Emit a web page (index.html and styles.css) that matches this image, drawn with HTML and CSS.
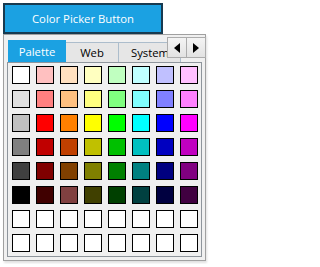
FILE: index.html
```html
<!DOCTYPE html>
<html>
<head>
<meta charset="utf-8">
<link rel="stylesheet" href="styles.css">
</head>
<body>
<div class="wrap">
  <div class="picker-btn">Color Picker Button</div>
  <div class="popup">
    <div class="tabstrip">
      <div class="tab active">Palette</div>
      <div class="tab">Web</div>
      <div class="tab">System</div>
    </div>
    <div class="scrollers">
      <div class="scroll-btn"><svg width="6" height="10" viewBox="0 0 6 10"><polygon points="6,0 6,10 0,5" fill="#000"/></svg></div>
      <div class="scroll-btn"><svg width="6" height="10" viewBox="0 0 6 10"><polygon points="0,0 0,10 6,5" fill="#000"/></svg></div>
    </div>
    <div class="content">
      <div class="grid">
        <span class="sw" style="background:#ffffff"></span>
        <span class="sw" style="background:#ffc0c0"></span>
        <span class="sw" style="background:#ffe0c0"></span>
        <span class="sw" style="background:#ffffc0"></span>
        <span class="sw" style="background:#c0ffc0"></span>
        <span class="sw" style="background:#c0ffff"></span>
        <span class="sw" style="background:#c0c0ff"></span>
        <span class="sw" style="background:#ffc0ff"></span>

        <span class="sw" style="background:#e0e0e0"></span>
        <span class="sw" style="background:#ff8080"></span>
        <span class="sw" style="background:#ffc080"></span>
        <span class="sw" style="background:#ffff80"></span>
        <span class="sw" style="background:#80ff80"></span>
        <span class="sw" style="background:#80ffff"></span>
        <span class="sw" style="background:#8080ff"></span>
        <span class="sw" style="background:#ff80ff"></span>

        <span class="sw" style="background:#c0c0c0"></span>
        <span class="sw" style="background:#ff0000"></span>
        <span class="sw" style="background:#ff8000"></span>
        <span class="sw" style="background:#ffff00"></span>
        <span class="sw" style="background:#00ff00"></span>
        <span class="sw" style="background:#00ffff"></span>
        <span class="sw" style="background:#0000ff"></span>
        <span class="sw" style="background:#ff00ff"></span>

        <span class="sw" style="background:#808080"></span>
        <span class="sw" style="background:#c00000"></span>
        <span class="sw" style="background:#c04000"></span>
        <span class="sw" style="background:#c0c000"></span>
        <span class="sw" style="background:#00c000"></span>
        <span class="sw" style="background:#00c0c0"></span>
        <span class="sw" style="background:#0000c0"></span>
        <span class="sw" style="background:#c000c0"></span>

        <span class="sw" style="background:#404040"></span>
        <span class="sw" style="background:#800000"></span>
        <span class="sw" style="background:#804000"></span>
        <span class="sw" style="background:#808000"></span>
        <span class="sw" style="background:#008000"></span>
        <span class="sw" style="background:#008080"></span>
        <span class="sw" style="background:#000080"></span>
        <span class="sw" style="background:#800080"></span>

        <span class="sw" style="background:#000000"></span>
        <span class="sw" style="background:#400000"></span>
        <span class="sw" style="background:#804040"></span>
        <span class="sw" style="background:#404000"></span>
        <span class="sw" style="background:#004000"></span>
        <span class="sw" style="background:#004040"></span>
        <span class="sw" style="background:#000040"></span>
        <span class="sw" style="background:#400040"></span>

        <span class="sw"></span><span class="sw"></span><span class="sw"></span><span class="sw"></span>
        <span class="sw"></span><span class="sw"></span><span class="sw"></span><span class="sw"></span>
        <span class="sw"></span><span class="sw"></span><span class="sw"></span><span class="sw"></span>
        <span class="sw"></span><span class="sw"></span><span class="sw"></span><span class="sw"></span>
      </div>
    </div>
  </div>
</div>
</body>
</html>
```

FILE: styles.css
```css
html, body {
  margin: 0;
  padding: 0;
  background: #ffffff;
}

body {
  font-family: "Open Sans", "Noto Sans", "Liberation Sans", sans-serif;
}

.wrap {
  padding: 3px;
}

.picker-btn {
  box-sizing: border-box;
  width: 160px;
  height: 31px;
  background: #1ba1e2;
  border: 2px solid #173a50;
  color: #ffffff;
  font-size: 11.3px;
  display: flex;
  align-items: center;
  justify-content: center;
}

.popup {
  position: relative;
  box-sizing: border-box;
  width: 203px;
  height: 227px;
  border: 1px solid #a0a0a0;
  background: #f0f0f0;
  padding: 5px 3px 3px 3px;
  box-shadow: 1px 2px 2px rgba(0, 0, 0, 0.12);
}

.tabstrip {
  display: flex;
  align-items: flex-end;
  height: 22px;
  margin-left: 1px;
  overflow: hidden;
  font-size: 11.3px;
}

.tab {
  box-sizing: border-box;
  height: 20px;
  display: flex;
  align-items: center;
  justify-content: center;
  background: #e6e6e6;
  border: 1px solid #acbdcc;
  border-bottom: none;
  color: #000000;
  flex: none;
}

.tab:nth-child(2) {
  width: 53px;
  border-left: none;
}

.tab:nth-child(3) {
  width: 62px;
  border-left: none;
  justify-content: flex-start;
  padding-left: 12px;
}

.tab.active {
  width: 58px;
  height: 22px;
  background: #1ba1e2;
  border: none;
  color: #ffffff;
}

.scrollers {
  position: absolute;
  top: 2px;
  left: 163px;
  display: flex;
}

.scroll-btn {
  box-sizing: border-box;
  width: 20px;
  height: 21px;
  border: 1px solid #acacac;
  background: linear-gradient(#f4f4f4, #e2e2e2);
  display: flex;
  align-items: center;
  justify-content: center;
}

.scroll-btn + .scroll-btn {
  width: 19px;
  border-left: none;
}

.content {
  box-sizing: border-box;
  width: 195px;
  border: 1px solid #8e959c;
  background: #f0f0f0;
  padding: 3px 3px 4px 4px;
}

.grid {
  display: grid;
  grid-template-columns: repeat(8, 18px);
  grid-auto-rows: 18px;
  gap: 6px;
}

.sw {
  box-sizing: border-box;
  display: block;
  width: 18px;
  height: 18px;
  border: 1px solid #000000;
  background: #ffffff;
}
```
